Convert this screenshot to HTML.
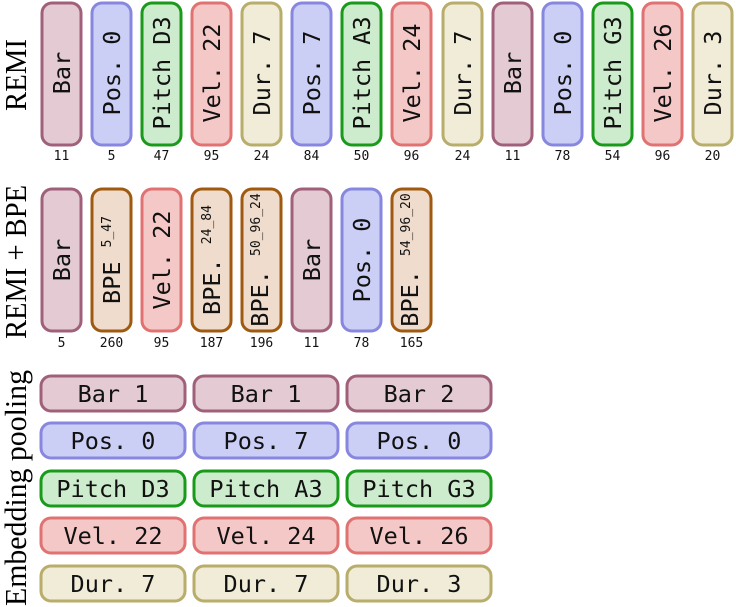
<!DOCTYPE html>
<html><head><meta charset="utf-8"><style>html,body{margin:0;padding:0;background:#fff}svg{display:block}</style></head><body>
<svg width="736" height="607" xmlns="http://www.w3.org/2000/svg" font-family="DejaVu Sans Mono, Liberation Mono, monospace">
<defs><style>
.Bar{fill:#e4cbd3;stroke:#a0607a}.Pos{fill:#cccff5;stroke:#8787e0}.Pit{fill:#cdebcd;stroke:#1a9a1a}.Vel{fill:#f5c8c8;stroke:#e07272}.Dur{fill:#f1ecd8;stroke:#b8ad6a}.BPE{fill:#efdccc;stroke:#a05a10}
rect{stroke-width:3}
.t{font-size:23.5px;fill:#111}
.n{font-size:13px;fill:#111}
.lab{font-family:"Liberation Serif",serif;font-size:31px;fill:#000}
</style></defs>
<text class="lab" transform="translate(26,75) rotate(-90)" text-anchor="middle" textLength="72" lengthAdjust="spacingAndGlyphs">REMI</text>
<text class="lab" transform="translate(26,262) rotate(-90)" text-anchor="middle" textLength="154" lengthAdjust="spacingAndGlyphs">REMI + BPE</text>
<text class="lab" transform="translate(26,488) rotate(-90)" text-anchor="middle" textLength="236" lengthAdjust="spacingAndGlyphs">Embedding pooling</text>
<g>
<rect class="Bar" x="42" y="3" width="39" height="142" rx="10"/><text class="t" transform="translate(70,73) rotate(-90)" text-anchor="middle">Bar</text><text class="n" x="61.5" y="160" text-anchor="middle">11</text>
<rect class="Pos" x="92" y="3" width="39" height="142" rx="10"/><text class="t" transform="translate(120,73) rotate(-90)" text-anchor="middle">Pos. 0</text><text class="n" x="111.5" y="160" text-anchor="middle">5</text>
<rect class="Pit" x="142" y="3" width="39" height="142" rx="10"/><text class="t" transform="translate(170,73) rotate(-90)" text-anchor="middle">Pitch D3</text><text class="n" x="161.5" y="160" text-anchor="middle">47</text>
<rect class="Vel" x="192" y="3" width="39" height="142" rx="10"/><text class="t" transform="translate(220,73) rotate(-90)" text-anchor="middle">Vel. 22</text><text class="n" x="211.5" y="160" text-anchor="middle">95</text>
<rect class="Dur" x="242" y="3" width="39" height="142" rx="10"/><text class="t" transform="translate(270,73) rotate(-90)" text-anchor="middle">Dur. 7</text><text class="n" x="261.5" y="160" text-anchor="middle">24</text>
<rect class="Pos" x="292" y="3" width="39" height="142" rx="10"/><text class="t" transform="translate(320,73) rotate(-90)" text-anchor="middle">Pos. 7</text><text class="n" x="311.5" y="160" text-anchor="middle">84</text>
<rect class="Pit" x="342" y="3" width="39" height="142" rx="10"/><text class="t" transform="translate(370,73) rotate(-90)" text-anchor="middle">Pitch A3</text><text class="n" x="361.5" y="160" text-anchor="middle">50</text>
<rect class="Vel" x="392" y="3" width="39" height="142" rx="10"/><text class="t" transform="translate(420,73) rotate(-90)" text-anchor="middle">Vel. 24</text><text class="n" x="411.5" y="160" text-anchor="middle">96</text>
<rect class="Dur" x="443" y="3" width="39" height="142" rx="10"/><text class="t" transform="translate(471,73) rotate(-90)" text-anchor="middle">Dur. 7</text><text class="n" x="462.5" y="160" text-anchor="middle">24</text>
<rect class="Bar" x="493" y="3" width="39" height="142" rx="10"/><text class="t" transform="translate(521,73) rotate(-90)" text-anchor="middle">Bar</text><text class="n" x="512.5" y="160" text-anchor="middle">11</text>
<rect class="Pos" x="543" y="3" width="39" height="142" rx="10"/><text class="t" transform="translate(571,73) rotate(-90)" text-anchor="middle">Pos. 0</text><text class="n" x="562.5" y="160" text-anchor="middle">78</text>
<rect class="Pit" x="593" y="3" width="39" height="142" rx="10"/><text class="t" transform="translate(621,73) rotate(-90)" text-anchor="middle">Pitch G3</text><text class="n" x="612.5" y="160" text-anchor="middle">54</text>
<rect class="Vel" x="643" y="3" width="39" height="142" rx="10"/><text class="t" transform="translate(671,73) rotate(-90)" text-anchor="middle">Vel. 26</text><text class="n" x="662.5" y="160" text-anchor="middle">96</text>
<rect class="Dur" x="693" y="3" width="39" height="142" rx="10"/><text class="t" transform="translate(721,73) rotate(-90)" text-anchor="middle">Dur. 3</text><text class="n" x="712.5" y="160" text-anchor="middle">20</text>
</g>
<g>
<rect class="Bar" x="42" y="189" width="39" height="142" rx="10"/><text class="t" transform="translate(70,260) rotate(-90)" text-anchor="middle">Bar</text><text class="n" x="61.5" y="347" text-anchor="middle">5</text>
<rect class="BPE" x="92" y="189" width="39" height="142" rx="10"/><text class="t" transform="translate(120,260) rotate(-90)" text-anchor="middle">BPE <tspan font-size="13" dy="-9">5_47</tspan></text><text class="n" x="111.5" y="347" text-anchor="middle">260</text>
<rect class="Vel" x="142" y="189" width="39" height="142" rx="10"/><text class="t" transform="translate(170,260) rotate(-90)" text-anchor="middle">Vel. 22</text><text class="n" x="161.5" y="347" text-anchor="middle">95</text>
<rect class="BPE" x="192" y="189" width="39" height="142" rx="10"/><text class="t" transform="translate(220,260) rotate(-90)" text-anchor="middle">BPE. <tspan font-size="13" dy="-9">24_84</tspan></text><text class="n" x="211.5" y="347" text-anchor="middle">187</text>
<rect class="BPE" x="242" y="189" width="39" height="142" rx="10"/><text class="t" transform="translate(268,260) rotate(-90)" text-anchor="middle" font-size="19">BPE. <tspan font-size="13" dy="-8">50_96_24</tspan></text><text class="n" x="261.5" y="347" text-anchor="middle">196</text>
<rect class="Bar" x="292" y="189" width="39" height="142" rx="10"/><text class="t" transform="translate(320,260) rotate(-90)" text-anchor="middle">Bar</text><text class="n" x="311.5" y="347" text-anchor="middle">11</text>
<rect class="Pos" x="342" y="189" width="39" height="142" rx="10"/><text class="t" transform="translate(370,260) rotate(-90)" text-anchor="middle">Pos. 0</text><text class="n" x="361.5" y="347" text-anchor="middle">78</text>
<rect class="BPE" x="392" y="189" width="39" height="142" rx="10"/><text class="t" transform="translate(418,260) rotate(-90)" text-anchor="middle" font-size="19">BPE. <tspan font-size="13" dy="-8">54_96_20</tspan></text><text class="n" x="411.5" y="347" text-anchor="middle">165</text>
</g>
<g class="t" text-anchor="middle">
<rect class="Bar" x="41" y="376" width="144" height="35" rx="10"/><rect class="Bar" x="194" y="376" width="144" height="35" rx="10"/><rect class="Bar" x="347" y="376" width="144" height="35" rx="10"/>
<text x="113" y="402">Bar 1</text><text x="266" y="402">Bar 1</text><text x="419" y="402">Bar 2</text>
<rect class="Pos" x="41" y="423" width="144" height="35" rx="10"/><rect class="Pos" x="194" y="423" width="144" height="35" rx="10"/><rect class="Pos" x="347" y="423" width="144" height="35" rx="10"/>
<text x="113" y="449">Pos. 0</text><text x="266" y="449">Pos. 7</text><text x="419" y="449">Pos. 0</text>
<rect class="Pit" x="41" y="471" width="144" height="35" rx="10"/><rect class="Pit" x="194" y="471" width="144" height="35" rx="10"/><rect class="Pit" x="347" y="471" width="144" height="35" rx="10"/>
<text x="113" y="497">Pitch D3</text><text x="266" y="497">Pitch A3</text><text x="419" y="497">Pitch G3</text>
<rect class="Vel" x="41" y="518" width="144" height="35" rx="10"/><rect class="Vel" x="194" y="518" width="144" height="35" rx="10"/><rect class="Vel" x="347" y="518" width="144" height="35" rx="10"/>
<text x="113" y="544">Vel. 22</text><text x="266" y="544">Vel. 24</text><text x="419" y="544">Vel. 26</text>
<rect class="Dur" x="41" y="566" width="144" height="35" rx="10"/><rect class="Dur" x="194" y="566" width="144" height="35" rx="10"/><rect class="Dur" x="347" y="566" width="144" height="35" rx="10"/>
<text x="113" y="592">Dur. 7</text><text x="266" y="592">Dur. 7</text><text x="419" y="592">Dur. 3</text>
</g>
</svg>
</body></html>
